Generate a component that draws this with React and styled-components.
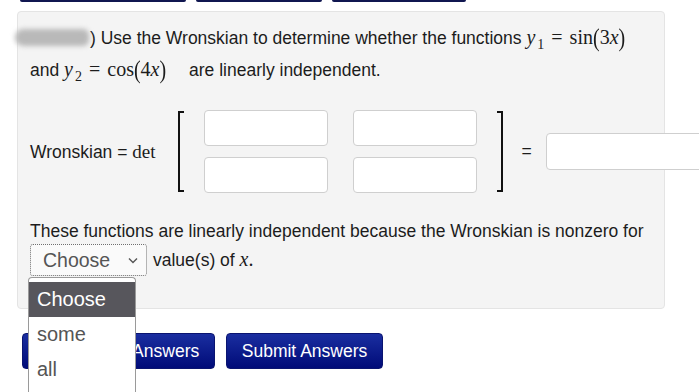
import React from 'react';
import styled, { createGlobalStyle } from 'styled-components';

const Global = createGlobalStyle`
  html, body { margin: 0; padding: 0; background: #fff; overflow: hidden; }
  body { font-family: "Liberation Sans", Arial, sans-serif; color: #1c1c1c; }
  #root { width: 699px; height: 392px; }
`;

const Page = styled.div`
  position: relative;
  width: 699px;
  height: 392px;
  overflow: hidden;
`;

const TopBars = styled.div`
  display: flex;
  gap: 10px;
  padding-left: 20px;
  height: 2px;
`;

const TopBar = styled.div`
  width: ${p => p.$w}px;
  background: #101650;
  border-radius: 0 0 2px 2px;
`;

const Panel = styled.div`
  box-sizing: border-box;
  margin: 9px 0 0 17px;
  width: 648px;
  background: #f4f4f4;
  border: 1px solid #e4e4e4;
  border-radius: 4px;
  padding: 10px 12px 32px 12px;
  font-size: 17.5px;
`;

const Question = styled.p`
  margin: 0;
  line-height: 32px;
`;

const Blur = styled.span`
  display: inline-block;
  width: 74px;
  height: 17px;
  margin-left: -15px;
  margin-right: 1px;
  vertical-align: -2px;
  background: #b9b9b9;
  border-radius: 9px 6px 6px 9px;
  filter: blur(2.5px);
`;

const Math = styled.span`
  font-family: "Liberation Serif", "Times New Roman", serif;
  font-size: 20px;
  line-height: 1;
  margin: ${p => p.$m || '0'};
  white-space: nowrap;
`;

const V = styled.i`
  font-style: italic;
`;

const Sub = styled.span`
  display: inline-block;
  font-size: 14px;
  line-height: 1;
  transform: translateY(5px);
  margin-left: 2px;
`;

const Op = styled.span`
  margin: 0 7px;
`;

const Paren = styled.span`
  display: inline-block;
  line-height: 1;
  transform: scaleY(1.25);
`;

const MatrixRow = styled.div`
  display: flex;
  align-items: center;
  margin-top: 24px;
  height: 83px;
`;

const Label = styled.span`
  margin-right: 22px;
  white-space: nowrap;
`;

const Det = styled.span`
  font-family: "Liberation Serif", "Times New Roman", serif;
  font-size: 19px;
`;

const Bracket = styled.span`
  box-sizing: border-box;
  width: 6px;
  height: 81px;
  flex-shrink: 0;
  border: 2px solid #111;
  ${p => (p.$right ? 'border-left: none;' : 'border-right: none;')}
`;

const Grid = styled.div`
  display: grid;
  grid-template-columns: 124px 124px;
  grid-auto-rows: 36px;
  column-gap: 25px;
  row-gap: 11px;
  margin: 0 20px;
`;

const Field = styled.div`
  box-sizing: border-box;
  width: ${p => (p.$w ? `${p.$w}px` : '100%')};
  height: ${p => (p.$h ? `${p.$h}px` : '100%')};
  flex-shrink: 0;
  background: #fff;
  border: 1px solid #cfcfcf;
  border-radius: 4px;
`;

const Equals = styled.span`
  margin: 0 14px 0 19px;
`;

const Statement = styled.p`
  margin: 27px 0 0 0;
  line-height: 22px;
  white-space: nowrap;
`;

const ChoiceRow = styled.div`
  display: flex;
  align-items: center;
  margin-top: 2px;
`;

const SelectWrap = styled.div`
  position: relative;
  margin-right: 6px;
`;

const SelectBox = styled.div`
  box-sizing: border-box;
  width: 117px;
  height: 32px;
  display: flex;
  align-items: center;
  justify-content: space-between;
  padding: 0 8px 0 12px;
  background: #fafafa;
  border: 1px dotted #6f6f6f;
  border-radius: 3px;
  color: #555;
  font-size: 19.5px;
`;

const Menu = styled.div`
  position: absolute;
  top: 33px;
  left: -2px;
  width: 108px;
  box-sizing: border-box;
  padding: 4px 0 12px;
  background: #fff;
  border: 1px solid #9a9a9a;
  border-bottom: none;
  border-radius: 4px 4px 0 0;
  z-index: 5;
`;

const MenuItem = styled.div`
  height: 35px;
  display: flex;
  align-items: center;
  padding-left: 8px;
  font-size: 20px;
  color: ${p => (p.$active ? '#fff' : '#555')};
  background: ${p => (p.$active ? '#57565c' : 'transparent')};
`;

const Buttons = styled.div`
  display: flex;
  gap: 11px;
  margin: 24px 0 0 22px;
`;

const Button = styled.button`
  box-sizing: border-box;
  width: ${p => p.$w}px;
  height: 36px;
  padding: 0;
  border: 1px solid #0a1470;
  border-radius: 4px;
  background: linear-gradient(#1a2ea0, #000b78);
  color: #fff;
  font-family: "Liberation Sans", Arial, sans-serif;
  font-size: 17.5px;
  text-align: center;
`;

export default function App() {
  return (
    <Page>
      <Global />
      <TopBars>
        <TopBar $w={166} />
        <TopBar $w={126} />
        <TopBar $w={134} />
      </TopBars>
      <Panel>
        <Question>
          <Blur />) Use the Wronskian to determine whether the functions{' '}
          <Math>
            <V>y</V><Sub>1</Sub><Op>=</Op>sin<Paren>(</Paren>3<V>x</V><Paren>)</Paren>
          </Math>
          <br />
          and{' '}
          <Math $m="0 18px 0 0">
            <V>y</V><Sub>2</Sub><Op>=</Op>cos<Paren>(</Paren>4<V>x</V><Paren>)</Paren>
          </Math>{' '}
          are linearly independent.
        </Question>
        <MatrixRow>
          <Label>
            Wronskian = <Det>det</Det>
          </Label>
          <Bracket />
          <Grid>
            <Field />
            <Field />
            <Field />
            <Field />
          </Grid>
          <Bracket $right />
          <Equals>=</Equals>
          <Field $w={200} $h={37} />
        </MatrixRow>
        <Statement>
          These functions are linearly independent because the Wronskian is nonzero for
        </Statement>
        <ChoiceRow>
          <SelectWrap>
            <SelectBox>
              Choose
              <svg width="10" height="7" viewBox="0 0 10 7">
                <path d="M1 1.5 L5 5.5 L9 1.5" fill="none" stroke="#555" strokeWidth="1.4" />
              </svg>
            </SelectBox>
            <Menu>
              <MenuItem $active>Choose</MenuItem>
              <MenuItem>some</MenuItem>
              <MenuItem>all</MenuItem>
            </Menu>
          </SelectWrap>
          <span>
            value(s) of <Math><V>x</V>.</Math>
          </span>
        </ChoiceRow>
      </Panel>
      <Buttons>
        <Button $w={193}>Preview My Answers</Button>
        <Button $w={157}>Submit Answers</Button>
      </Buttons>
    </Page>
  );
}
